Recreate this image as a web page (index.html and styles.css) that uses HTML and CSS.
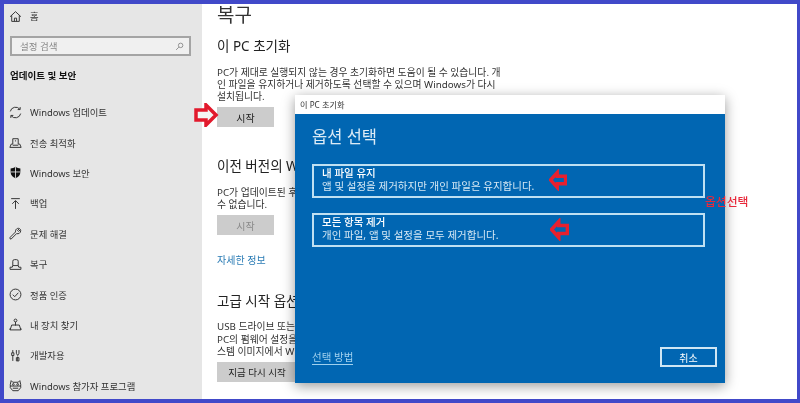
FILE: index.html
```html
<!DOCTYPE html>
<html lang="ko">
<head>
<meta charset="utf-8">
<title>복구</title>
<link rel="stylesheet" href="styles.css">
</head>
<body>
<div class="frame">
  <aside class="sidebar">
    <div class="nav-item home">
      <svg class="icon" viewBox="0 0 12 12"><path d="M1 6.200 6 1.500l5 4.700M2.500 5v5.500h7V5M5 10.500V7.500h2v3"/></svg>
      <span>홈</span>
    </div>
    <div class="search"><span>설정 검색</span>
      <svg class="search-icon" viewBox="0 0 12 12"><circle cx="7.500" cy="4.500" r="3"/><path d="M5.200 6.800 1.500 10.500"/></svg>
    </div>
    <div class="side-title">업데이트 및 보안</div>
    <nav class="nav">
      <div class="nav-item"><svg class="icon" viewBox="0 0 12 12"><path d="M1.200 5A5 5 0 0 1 10 3M10.800 7A5 5 0 0 1 2 9M10.300 1v2.300H8M1.700 11V8.700h2.300"/></svg><span>Windows 업데이트</span></div>
      <div class="nav-item"><svg class="icon" viewBox="0 0 12 12"><path d="M.8 10.500h10.400L10 7.500H8.500V2.500h-5v5H2zM3.500 8.500h5M5.500 4.500h1"/></svg><span>전송 최적화</span></div>
      <div class="nav-item"><svg class="icon solid" viewBox="0 0 12 12"><path d="M6 .8c1.500 1 3 1.400 4.500 1.400v3.300c0 3-2 4.800-4.500 5.700-2.500-.9-4.500-2.700-4.500-5.700V2.200C3 2.200 4.500 1.800 6 .8z"/><path class="cut" d="M6 1v10M1.500 5.500h9"/></svg><span>Windows 보안</span></div>
      <div class="nav-item"><svg class="icon" viewBox="0 0 12 12"><path d="M2 1.500h8M6 11V3.500M3 6.300l3-3 3 3"/></svg><span>백업</span></div>
      <div class="nav-item"><svg class="icon" viewBox="0 0 12 12"><path d="M1 11l1 .1 5-5c1.800.6 3.800-.6 3.800-2.600 0-.5 0-.8-.2-1.200L8.800 4.100 7.900 3.200 9.700 1.400C7.600.6 5.700 2.300 6 4.600l-5 5z"/></svg><span>문제 해결</span></div>
      <div class="nav-item"><svg class="icon" viewBox="0 0 12 12"><path d="M1 10.500h10V8.500H9L8.500 7H3.500L3 8.500H1zM3.500 7V3A1.500 1.500 0 0 1 5 1.500h2A1.500 1.500 0 0 1 8.500 3v4"/></svg><span>복구</span></div>
      <div class="nav-item"><svg class="icon" viewBox="0 0 12 12"><circle cx="6" cy="6" r="5"/><path d="M3.500 6.200 5.300 8l3.300-3.600"/></svg><span>정품 인증</span></div>
      <div class="nav-item"><svg class="icon" viewBox="0 0 12 12"><circle cx="6" cy="2.300" r="1.300"/><path d="M6 3.600V7M1 11h10L9.500 6.500h-7zM1 11V9.500M11 11V9.500"/></svg><span>내 장치 찾기</span></div>
      <div class="nav-item"><svg class="icon" viewBox="0 0 12 12"><path d="M3.500 11V6M3.500 3.500V1M2.500 3.500h2V6h-2zM8 11V7M6.800 1v3L8 6l1.200-2V1M6.800 8h2.400v3H6.800z"/></svg><span>개발자용</span></div>
      <div class="nav-item"><svg class="icon" viewBox="0 0 12 12"><path d="M2 1.500 3.500 3h5L10 1.500l.8 3.500v3L8.500 10.800h-5L1.200 8V5zM1.200 6.500h9.600"/><circle cx="4" cy="5" r=".8"/><circle cx="8" cy="5" r=".8"/><path d="M3.500 8.500h5"/></svg><span>Windows 참가자 프로그램</span></div>
    </nav>
  </aside>
  <main class="content">
    <h1 class="page-title">복구</h1>
    <h2 class="section first">이 PC 초기화</h2>
    <p class="para">PC가 제대로 실행되지 않는 경우 초기화하면 도움이 될 수 있습니다. 개<br>인 파일을 유지하거나 제거하도록 선택할 수 있으며 Windows가 다시<br>설치됩니다.</p>
    <div class="btn">시작</div>
    <h2 class="section second">이전 버전의 Windows 10으로 돌아가기</h2>
    <p class="para">PC가 업데이트된 후 10일이 지나지 않았으면 이전 버전으로 돌아갈<br>수 없습니다.</p>
    <div class="btn disabled">시작</div>
    <a class="more">자세한 정보</a>
    <h2 class="section third">고급 시작 옵션</h2>
    <p class="para">USB 드라이브 또는 디스크에서 시작하거나 Windows 시작 설정 또는<br>PC의 펌웨어 설정을 변경하고 Windows 시작 설정을 변경하거나 시<br>스템 이미지에서 Windows를 복원합니다.</p>
    <div class="btn wide">지금 다시 시작</div>
  </main>
</div>

<svg class="mark mark-start" viewBox="0 0 24 24"><path d="M2 7h10V2l10 10-10 10v-5H2z"/></svg>

<section class="dialog">
  <header class="dialog-bar">이 PC 초기화</header>
  <div class="dialog-body">
    <h2 class="dialog-title">옵션 선택</h2>
    <div class="option"><b>내 파일 유지</b><span>앱 및 설정을 제거하지만 개인 파일은 유지합니다.</span></div>
    <div class="option"><b>모든 항목 제거</b><span>개인 파일, 앱 및 설정을 모두 제거합니다.</span></div>
    <div class="dialog-foot">
      <a class="how">선택 방법</a>
      <div class="cancel">취소</div>
    </div>
  </div>
</section>

<svg class="mark dot mark-a" viewBox="0 0 24 24"><path d="M2 12 11 2v5h11v10H11v5z"/></svg>
<svg class="mark dot mark-b" viewBox="0 0 24 24"><path d="M2 12 11 2v5h11v10H11v5z"/></svg>
<div class="note">옵션선택</div>
</body>
</html>
```

FILE: styles.css
```css
* { box-sizing: border-box; }
html, body { margin: 0; height: 403px; overflow: hidden; }
body {
  position: relative;
  width: 800px;
  background: #fff;
  color: #222;
  font-family: "Noto Sans", "Noto Sans CJK KR", sans-serif;
  font-size: 10px;
  filter: blur(.35px);
}
.frame {
  display: flex;
  width: 800px;
  height: 403px;
  border: solid #4149c9;
  border-width: 4px 3px 4px 4px;
  background: #fff;
}
.sidebar { width: 198px; flex: none; background: #e6e6e6; }
.icon {
  width: 13px; height: 13px; flex: none;
  fill: none; stroke: #333; stroke-width: .9;
}
.icon.solid { fill: #111; stroke: none; }
.icon .cut { fill: none; stroke: #e6e6e6; stroke-width: .8; }
.nav-item {
  display: flex; align-items: center; gap: 8px;
  height: 30.400px; padding-left: 5px;
  color: #333; font-size: 9.400px; white-space: nowrap;
}
.nav-item.home { height: 24px; }
.search {
  display: flex; align-items: center; justify-content: space-between;
  width: 181px; height: 20px; margin: 8px 0 0 6px; padding: 0 5px 0 8px;
  background: #f0f0f0; border: 2px solid #a4a4a4;
  color: #888; font-size: 9.500px;
}
.search-icon { width: 9px; height: 9px; fill: none; stroke: #777; stroke-width: 1; }
.side-title { margin: 13px 0 14px 6px; font-size: 9.500px; font-weight: 700; color: #111; line-height: 14px; }
.content { flex: 1; padding-left: 13px; overflow: hidden; }
.page-title { margin: 0 0 0 2px; font-size: 19px; font-weight: 400; line-height: 22px; color: #333; }
.section { margin: 0 0 0 2px; font-size: 13.500px; font-weight: 400; line-height: 20px; color: #222; white-space: nowrap; }
.section.first { margin-top: 10px; }
.section.second { margin-top: 29px; }
.section.third { margin-top: 24px; }
.para { margin: 10.500px 0 0 2px; font-size: 9.800px; line-height: 12.300px; color: #333; white-space: nowrap; }
.btn {
  display: flex; align-items: center; justify-content: center;
  width: 57px; height: 20px; margin: 4px 0 0 2px;
  background: #ccc; color: #222; font-size: 10px;
}
.btn.disabled { color: #8a8a8a; }
.btn.wide { width: 80px; font-size: 9.500px; }
.more { display: block; margin: 17.500px 0 0 2px; color: #2b7cb5; font-size: 10px; line-height: 14px; }
.dialog {
  position: absolute; left: 295px; top: 95px;
  display: flex; flex-direction: column;
  width: 430px; height: 288px;
  box-shadow: 0 3px 12px rgba(0,0,0,.4);
}
.dialog-bar {
  height: 19px; flex: none; padding-left: 5px;
  background: #fff; color: #333; font-size: 8.200px; line-height: 19px;
}
.dialog-body {
  flex: 1; display: flex; flex-direction: column;
  padding: 0 8px 16px 17px;
  background: #0166b2; color: #fff;
}
.dialog-title { margin: 9px 0 13px; font-size: 16.500px; font-weight: 400; line-height: 28px; color: #dcebf6; }
.option {
  display: flex; flex-direction: column; justify-content: center;
  width: 393px; height: 34px; margin-bottom: 15px; padding: 0 0 2px 8px;
  border: 2px solid #bfe0f2; font-size: 10.500px; line-height: 13px; color: #d6e8f4;
}
.option b { color: #fff; font-weight: 500; }
.dialog-foot { margin-top: auto; display: flex; align-items: center; justify-content: space-between; }
.how { color: #9fd0ee; font-size: 10.500px; line-height: 14px; border-bottom: 1px solid #9fd0ee; }
.cancel {
  display: flex; align-items: center; justify-content: center;
  width: 57px; height: 20px; border: 2px solid #cfe6f4; color: #fff; font-size: 10px;
}
.mark { position: absolute; fill: #f4f4f4; stroke: #e2192c; stroke-width: 3.500; }
.mark.dot { fill: #0166b2; stroke: #e8202e; stroke-width: 4.500; }
.mark-start { left: 193px; top: 103px; width: 26px; height: 24px; }
.mark-a { left: 549px; top: 169px; width: 18px; height: 22px; }
.mark-b { left: 550px; top: 218px; width: 19px; height: 23px; }
.note { position: absolute; left: 705px; top: 193px; color: #e8283a; font-size: 11.800px; font-weight: 500; line-height: 16px; }
```
